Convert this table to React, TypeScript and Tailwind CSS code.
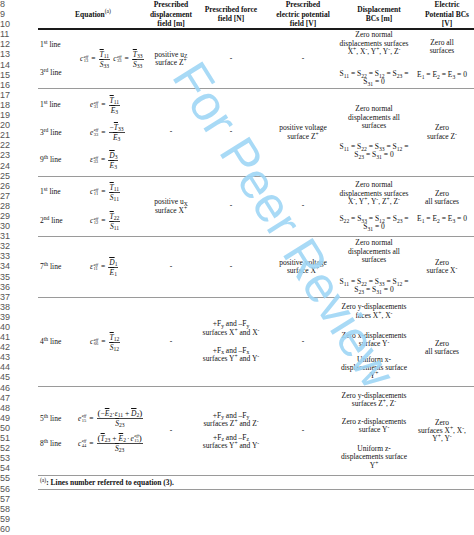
import React from 'react';

const lineNumbers = Array.from({ length: 53 }, (_, i) => i + 8);

const cols = 'grid grid-cols-[110px_46px_74px_70px_72px_64px]';
const cell = 'flex flex-col items-center justify-center text-center leading-[8.3px] whitespace-nowrap';

function Coef({ s, sub }: { s: string; sub: string }) {
  return (
    <span className="inline-flex items-center">
      <span className="italic">{s}</span>
      <span className="ml-[0.5px] flex flex-col text-[4.5px] leading-[4.5px]">
        <span className="italic">eff</span>
        <span>{sub}</span>
      </span>
    </span>
  );
}

function V({ c, s, bar = true }: { c: string; s: string; bar?: boolean }) {
  return (
    <span className="italic">
      <span className={bar ? 'overline' : ''}>{c}</span>
      <sub className="not-italic">{s}</sub>
    </span>
  );
}

function Frac({ top, bottom }: { top: React.ReactNode; bottom: React.ReactNode }) {
  return (
    <span className="inline-flex flex-col items-center">
      <span className="px-[1px] leading-[9px] whitespace-nowrap">{top}</span>
      <span className="h-px w-full bg-[#444]" />
      <span className="px-[1px] leading-[9px] whitespace-nowrap">{bottom}</span>
    </span>
  );
}

function Eq({ lhs, top, bottom }: { lhs: React.ReactNode; top: React.ReactNode; bottom: React.ReactNode }) {
  return (
    <div className="flex items-center gap-[3px] whitespace-nowrap">
      {lhs}
      <span>=</span>
      <Frac top={top} bottom={bottom} />
    </div>
  );
}

function Label({ n, sup }: { n: string; sup: string }) {
  return (
    <span className="whitespace-nowrap">
      {n}
      <sup>{sup}</sup> line
    </span>
  );
}

const Dash = () => <div className={cell}>-</div>;

export default function App() {
  return (
    <div className="relative w-[474px] h-[535px] overflow-hidden bg-white font-['Liberation_Serif',serif] text-[7.5px] text-[#111]">
      <div className="flex">
        <div className="w-[38px] shrink-0 -mt-[1px] font-['Liberation_Sans',Arial,sans-serif] text-[9px] leading-[10.1px] text-[#555]">
          {lineNumbers.map((n) => (
            <div key={n} className="h-[10.1px]">
              {n}
            </div>
          ))}
        </div>

        <div className="flex-1 min-w-0 flex flex-col">
          {/* header */}
          <div className={`${cols} h-[30px] pb-[3px] border-b-2 border-[#1a1a1a] font-bold text-[7.5px] leading-[9.5px]`}>
            <div className="flex items-center justify-center">
              Equation<sup className="font-normal">(a)</sup>
            </div>
            <div className={`${cell} leading-[9.5px]`}>
              <span>Prescribed</span>
              <span>displacement</span>
              <span>field [m]</span>
            </div>
            <div className={`${cell} leading-[9.5px]`}>
              <span>Prescribed force</span>
              <span>field [N]</span>
            </div>
            <div className={`${cell} leading-[9.5px]`}>
              <span>Prescribed</span>
              <span>electric potential</span>
              <span>field [V]</span>
            </div>
            <div className={`${cell} leading-[9.5px] pl-[10px]`}>
              <span>Displacement</span>
              <span>BCs [m]</span>
            </div>
            <div className={`${cell} leading-[9.5px] pl-[10px]`}>
              <span>Electric</span>
              <span>Potential BCs</span>
              <span>[V]</span>
            </div>
          </div>

          {/* 1st / 3rd line, c33 */}
          <div className={`${cols} h-[59px] border-b border-[#9a9a9a]`}>
            <div className="flex flex-col justify-center pl-[2px] leading-[8px]">
              <Label n="1" sup="st" />
              <div className="flex h-[20px] items-center gap-[3px] pl-[40px]">
                <Eq lhs={<Coef s="c" sub="13" />} top={<V c="T" s="11" />} bottom={<V c="S" s="33" />} />
                <Eq lhs={<Coef s="c" sub="33" />} top={<V c="T" s="33" />} bottom={<V c="S" s="33" />} />
              </div>
              <Label n="3" sup="rd" />
            </div>
            <div className={cell}>
              <span>
                positive u<sub>Z</sub>
              </span>
              <span>
                surface Z<sup>+</sup>
              </span>
            </div>
            <Dash />
            <Dash />
            <div className={cell}>
              <span>Zero normal</span>
              <span>displacements surfaces</span>
              <span>
                X<sup>+</sup>, X<sup>-</sup>, Y<sup>+</sup>, Y<sup>-</sup>, Z<sup>-</sup>
              </span>
              <span className="mt-[14px]">
                S<sub>11</sub> = S<sub>22</sub> = S<sub>12</sub> = S<sub>23</sub> =
              </span>
              <span>
                S<sub>31</sub> = 0
              </span>
            </div>
            <div className={cell}>
              <span>Zero all</span>
              <span>surfaces</span>
              <span className="mt-[16px]">
                E<sub>1</sub> = E<sub>2</sub> = E<sub>3</sub> = 0
              </span>
            </div>
          </div>

          {/* 1st / 3rd / 9th line, E3 */}
          <div className={`${cols} h-[88px] border-b border-[#9a9a9a]`}>
            <div className="flex flex-col justify-center pl-[2px] leading-[8px]">
              <div className="flex h-[27.5px] items-center">
                <span className="w-[50px]">
                  <Label n="1" sup="st" />
                </span>
                <Eq lhs={<Coef s="e" sub="31" />} top={<V c="T" s="11" />} bottom={<V c="E" s="3" />} />
              </div>
              <div className="flex h-[27.5px] items-center">
                <span className="w-[50px]">
                  <Label n="3" sup="rd" />
                </span>
                <Eq
                  lhs={<Coef s="e" sub="33" />}
                  top={
                    <span>
                      −<V c="T" s="33" />
                    </span>
                  }
                  bottom={<V c="E" s="3" />}
                />
              </div>
              <div className="flex h-[27.5px] items-center">
                <span className="w-[50px]">
                  <Label n="9" sup="th" />
                </span>
                <Eq lhs={<Coef s="ε" sub="33" />} top={<V c="D" s="3" />} bottom={<V c="E" s="3" />} />
              </div>
            </div>
            <Dash />
            <Dash />
            <div className={cell}>
              <span>positive voltage</span>
              <span>
                surface Z<sup>+</sup>
              </span>
            </div>
            <div className={cell}>
              <span>Zero normal</span>
              <span>displacements all</span>
              <span>surfaces</span>
              <span className="mt-[13px]">
                S<sub>11</sub> = S<sub>22</sub> = S<sub>33</sub> = S<sub>12</sub> =
              </span>
              <span>
                S<sub>23</sub> = S<sub>31</sub> = 0
              </span>
            </div>
            <div className={cell}>
              <span>Zero</span>
              <span>
                surface Z<sup>-</sup>
              </span>
            </div>
          </div>

          {/* 1st / 2nd line, S11 */}
          <div className={`${cols} h-[60px] border-b border-[#9a9a9a]`}>
            <div className="flex flex-col justify-center pl-[2px] leading-[8px]">
              <div className="flex h-[29px] items-center">
                <span className="w-[50px]">
                  <Label n="1" sup="st" />
                </span>
                <Eq lhs={<Coef s="c" sub="11" />} top={<V c="T" s="11" />} bottom={<V c="S" s="11" />} />
              </div>
              <div className="flex h-[29px] items-center">
                <span className="w-[50px]">
                  <Label n="2" sup="nd" />
                </span>
                <Eq lhs={<Coef s="c" sub="12" />} top={<V c="T" s="22" />} bottom={<V c="S" s="11" />} />
              </div>
            </div>
            <div className={cell}>
              <span>
                positive u<sub>X</sub>
              </span>
              <span>
                surface X<sup>+</sup>
              </span>
            </div>
            <Dash />
            <Dash />
            <div className={cell}>
              <span>Zero normal</span>
              <span>displacements surfaces</span>
              <span>
                X<sup>-</sup>, Y<sup>+</sup>, Y<sup>-</sup>, Z<sup>+</sup>, Z<sup>-</sup>
              </span>
              <span className="mt-[9px]">
                S<sub>22</sub> = S<sub>33</sub> = S<sub>12</sub> = S<sub>23</sub> =
              </span>
              <span>
                S<sub>31</sub> = 0
              </span>
            </div>
            <div className={cell}>
              <span>Zero</span>
              <span>all surfaces</span>
              <span className="mt-[9px]">
                E<sub>1</sub> = E<sub>2</sub> = E<sub>3</sub> = 0
              </span>
            </div>
          </div>

          {/* 7th line, E1 */}
          <div className={`${cols} h-[61px] border-b border-[#9a9a9a]`}>
            <div className="flex flex-col justify-center pl-[2px] leading-[8px]">
              <div className="flex items-center">
                <span className="w-[50px]">
                  <Label n="7" sup="th" />
                </span>
                <Eq lhs={<Coef s="ε" sub="11" />} top={<V c="D" s="1" />} bottom={<V c="E" s="1" />} />
              </div>
            </div>
            <Dash />
            <Dash />
            <div className={cell}>
              <span>positive voltage</span>
              <span>
                surface X<sup>+</sup>
              </span>
            </div>
            <div className={cell}>
              <span>Zero normal</span>
              <span>displacements all</span>
              <span>surfaces</span>
              <span className="mt-[14px]">
                S<sub>11</sub> = S<sub>22</sub> = S<sub>33</sub> = S<sub>12</sub> =
              </span>
              <span>
                S<sub>23</sub> = S<sub>31</sub> = 0
              </span>
            </div>
            <div className={cell}>
              <span>Zero</span>
              <span>
                surface X<sup>-</sup>
              </span>
            </div>
          </div>

          {/* 4th line, shear xy */}
          <div className={`${cols} h-[89px] border-b border-[#9a9a9a]`}>
            <div className="flex flex-col justify-center pl-[2px] leading-[8px]">
              <div className="flex items-center">
                <span className="w-[50px]">
                  <Label n="4" sup="th" />
                </span>
                <Eq lhs={<Coef s="c" sub="66" />} top={<V c="T" s="12" />} bottom={<V c="S" s="12" />} />
              </div>
            </div>
            <Dash />
            <div className={cell}>
              <span>
                +F<sub>y</sub> and –F<sub>y</sub>
              </span>
              <span>
                surfaces X<sup>+</sup> and X<sup>-</sup>
              </span>
              <span className="mt-[10px]">
                +F<sub>x</sub> and –F<sub>x</sub>
              </span>
              <span>
                surfaces Y<sup>+</sup> and Y<sup>-</sup>
              </span>
            </div>
            <Dash />
            <div className={cell}>
              <span>Zero y-displacements</span>
              <span>
                faces X<sup>+</sup>, X<sup>-</sup>
              </span>
              <span className="mt-[12px]">Zero x-displacements</span>
              <span>
                surface Y<sup>-</sup>
              </span>
              <span className="mt-[7px]">Uniform x-</span>
              <span>displacements surface</span>
              <span>
                Y<sup>+</sup>
              </span>
            </div>
            <div className={`${cell} pt-[12px]`}>
              <span>Zero</span>
              <span>all surfaces</span>
            </div>
          </div>

          {/* 5th / 8th line, shear yz */}
          <div className={`${cols} h-[89px] border-b border-[#9a9a9a]`}>
            <div className="flex flex-col justify-center pl-[2px] leading-[8px]">
              <div className="flex h-[25px] items-center">
                <span className="w-[38px]">
                  <Label n="5" sup="th" />
                </span>
                <Eq
                  lhs={<Coef s="e" sub="15" />}
                  top={
                    <span>
                      <span className="text-[9px]">(</span>−<V c="E" s="2" />·<V c="ε" s="11" bar={false} /> + <V c="D" s="2" />
                      <span className="text-[9px]">)</span>
                    </span>
                  }
                  bottom={<V c="S" s="23" />}
                />
              </div>
              <div className="flex h-[25px] items-center">
                <span className="w-[38px]">
                  <Label n="8" sup="th" />
                </span>
                <Eq
                  lhs={<Coef s="c" sub="44" />}
                  top={
                    <span className="inline-flex items-center">
                      <span className="text-[9px]">(</span>
                      <V c="T" s="23" />
                      <span className="mx-[2px]">+</span>
                      <V c="E" s="2" />
                      <span className="mx-[1px]">·</span>
                      <Coef s="e" sub="15" />
                      <span className="text-[9px]">)</span>
                    </span>
                  }
                  bottom={<V c="S" s="23" />}
                />
              </div>
            </div>
            <Dash />
            <div className={cell}>
              <span>
                +F<sub>y</sub> and –F<sub>y</sub>
              </span>
              <span>
                surfaces Z<sup>+</sup> and Z<sup>-</sup>
              </span>
              <span className="mt-[5px]">
                +F<sub>z</sub> and –F<sub>z</sub>
              </span>
              <span>
                surfaces Y<sup>+</sup> and Y<sup>-</sup>
              </span>
            </div>
            <Dash />
            <div className={cell}>
              <span>Zero y-displacements</span>
              <span>
                surfaces Z<sup>+</sup>, Z<sup>-</sup>
              </span>
              <span className="mt-[9px]">Zero z-displacements</span>
              <span>
                surface Y<sup>-</sup>
              </span>
              <span className="mt-[11px]">Uniform z-</span>
              <span>displacements surface</span>
              <span>
                Y<sup>+</sup>
              </span>
            </div>
            <div className={cell}>
              <span>Zero</span>
              <span>
                surfaces X<sup>+</sup>, X<sup>-</sup>,
              </span>
              <span>
                Y<sup>+</sup>, Y<sup>-</sup>
              </span>
            </div>
          </div>

          {/* footnote */}
          <div className="flex h-[14px] items-center border-b border-[#9a9a9a] pl-[2px] font-bold">
            <span>
              <sup className="font-normal">(a)</sup>: Lines number referred to equation (3).
            </span>
          </div>
        </div>
      </div>

      <div className="pointer-events-none absolute left-[284px] top-[225px] -translate-x-1/2 -translate-y-1/2 rotate-[58deg] whitespace-nowrap font-['Liberation_Sans',Arial,sans-serif] text-[50px] leading-none text-[#9fd6f6] opacity-90">
        For Peer Review
      </div>
    </div>
  );
}
